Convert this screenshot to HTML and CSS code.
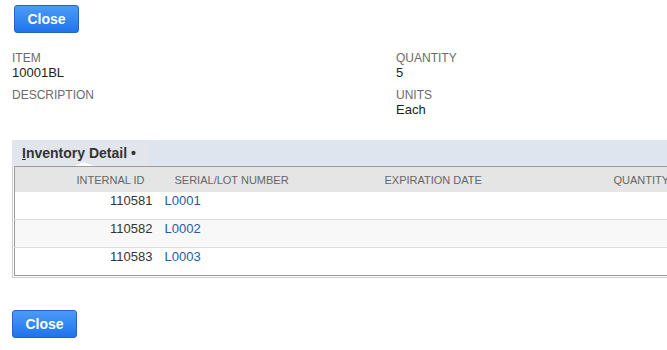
FILE: index.html
```html
<!DOCTYPE html>
<html lang="en">
<head>
	<meta charset="UTF-8">
	<title>Inventory Detail</title>
	<link rel="stylesheet" href="styles.css">
</head>
<body>
	<div class="top-bar">
		<button class="btn">Close</button>
	</div>
	<div class="fields">
		<div class="col">
			<div class="field">
				<div class="label">ITEM</div>
				<div class="value">10001BL</div>
			</div>
			<div class="field">
				<div class="label">DESCRIPTION</div>
			</div>
		</div>
		<div class="col">
			<div class="field">
				<div class="label">QUANTITY</div>
				<div class="value">5</div>
			</div>
			<div class="field">
				<div class="label">UNITS</div>
				<div class="value">Each</div>
			</div>
		</div>
	</div>
	<div class="tabs">
		<div class="tab"><u>I</u>nventory Detail &bull;</div>
	</div>
	<div class="sublist">
		<table>
			<colgroup>
				<col class="w-id">
				<col class="w-lot">
				<col class="w-exp">
				<col>
			</colgroup>
			<thead>
				<tr>
					<th class="c-id">INTERNAL ID</th>
					<th class="c-lot">SERIAL/LOT NUMBER</th>
					<th class="c-exp">EXPIRATION DATE</th>
					<th class="c-qty">QUANTITY</th>
				</tr>
			</thead>
			<tbody>
				<tr>
					<td class="c-id">110581</td>
					<td class="c-lot"><a href="#">L0001</a></td>
					<td></td>
					<td></td>
				</tr>
				<tr class="alt">
					<td class="c-id">110582</td>
					<td class="c-lot"><a href="#">L0002</a></td>
					<td></td>
					<td></td>
				</tr>
				<tr>
					<td class="c-id">110583</td>
					<td class="c-lot"><a href="#">L0003</a></td>
					<td></td>
					<td></td>
				</tr>
			</tbody>
		</table>
	</div>
	<div class="bottom-bar">
		<button class="btn">Close</button>
	</div>
</body>
</html>
```

FILE: styles.css
```css
html, body {
	margin: 0;
	overflow: hidden;
}
body {
	font-family: "Liberation Sans", Arial, sans-serif;
	color: #222;
	background: #fff;
}
.btn {
	display: block;
	width: 65px;
	height: 28px;
	padding: 0;
	border: 1px solid #2462c4;
	border-radius: 3px;
	background: linear-gradient(#4c9bf8, #1f74ec);
	color: #fff;
	font-family: "Liberation Sans", Arial, sans-serif;
	font-size: 14px;
	font-weight: bold;
}
.top-bar {
	padding: 5px 0 0 14px;
}
.fields {
	display: flex;
	padding: 18px 0 0 12px;
}
.col {
	flex: none;
	width: 384px;
}
.col + .col {
	flex: 1;
	width: auto;
}
.field {
	margin-bottom: 8px;
}
.label {
	font-size: 12px;
	line-height: 14px;
	color: #6b6b6b;
}
.value {
	font-size: 13px;
	line-height: 15px;
	color: #222;
}
.tabs {
	margin: 15px 0 0 12px;
	height: 26px;
	background: #dfe5ef;
}
.tab {
	position: relative;
	display: inline-block;
	height: 26px;
	line-height: 26px;
	padding: 0 10px;
	width: 116px;
	background: #e2e6ec;
	font-size: 14px;
	font-weight: bold;
	color: #333;
}
.tab u {
	text-decoration: underline;
}
/* little white notch under the tab */
.tab:after {
	content: '';
	position: absolute;
	left: 62px;
	bottom: 0;
	border-left: 10px solid transparent;
	border-right: 10px solid transparent;
	border-bottom: 4px solid #fff;
}
.sublist {
	margin-left: 12px;
	width: 720px;
	border: 1px solid #cfcfcf;
	border-top: none;
	padding: 0 0 1px 1px;
}
table {
	width: 100%;
	table-layout: fixed;
	border-collapse: collapse;
	border-top: 1px solid #9a9a9a;
	border-left: 1px solid #9a9a9a;
	border-bottom: 1px solid #9a9a9a;
}
col.w-id {
	width: 145px;
}
col.w-lot {
	width: 209px;
}
col.w-exp {
	width: 229px;
}
th {
	height: 25px;
	padding: 0;
	background: #e5e5e5;
	font-size: 11px;
	font-weight: normal;
	color: #666;
	text-align: left;
	vertical-align: middle;
	white-space: nowrap;
	overflow: hidden;
}
td {
	height: 27px;
	padding: 0;
	font-size: 13px;
	color: #333;
	vertical-align: top;
	line-height: 18px;
	border-top: 1px solid #dcdcdc;
}
tbody tr:first-child td {
	border-top: none;
}
tr.alt td {
	background: #f8f8f8;
}
.c-id {
	text-align: right;
	padding-right: 7px;
}
th.c-id {
	padding-right: 15px;
}
.c-lot {
	padding-left: 5px;
}
th.c-lot {
	padding-left: 15px;
}
.c-exp {
	padding-left: 16px;
}
.c-qty {
	padding-left: 16px;
}
a {
	color: #255ba8;
	text-decoration: none;
}
.bottom-bar {
	padding: 32px 0 0 12px;
}
```
